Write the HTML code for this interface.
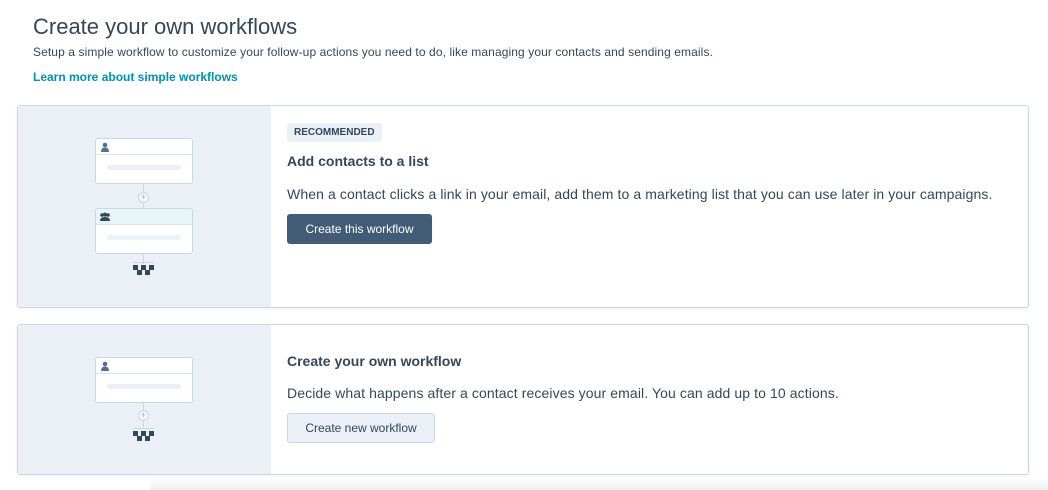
<!DOCTYPE html><html><head><style>
body{margin:0;width:1048px;height:490px;background:#fff;font-family:"Liberation Sans",sans-serif;color:#33475b;position:relative;overflow:hidden}
.a{position:absolute}
h1{position:absolute;left:33px;top:14px;margin:0;font-size:22px;font-weight:normal;color:#33475b}
.card{position:absolute;left:17px;width:1010px;border:1px solid #cbd6e2;border-radius:3px;background:#fff;box-shadow:0 1px 3px rgba(0,0,0,.06)}
.ill{position:absolute;left:0;top:0;bottom:0;width:253px;background:#eaf0f6}
.node{position:absolute;left:77px;width:96px;height:44px;border:1px solid #cbd6e2;border-radius:3px;background:#fff;overflow:hidden}
.node .hd{height:15px;border-bottom:1px solid #dfe3eb}
.node .bar{position:absolute;left:11px;top:26px;width:74px;height:5px;border-radius:3px;background:#eaf0f6}
.line{position:absolute;left:125px;width:1px;background:#cbd6e2}
.plus{position:absolute;left:120px;width:9px;height:9px;border:1px solid #cbd6e2;border-radius:50%;background:#f5f8fa;font-size:9px;line-height:9px;text-align:center;color:#a3b1c2}
.flag{position:absolute;left:115px;width:21px;height:12px;background:
linear-gradient(#33475b,#33475b) 0 2px/5px 5px no-repeat,
linear-gradient(#33475b,#33475b) 8px 2px/5px 5px no-repeat,
linear-gradient(#33475b,#33475b) 16px 2px/5px 5px no-repeat,
linear-gradient(#33475b,#33475b) 4px 7px/5px 5px no-repeat,
linear-gradient(#33475b,#33475b) 12px 7px/5px 5px no-repeat;border-top:1px solid #cbd6e2}
.t{position:absolute;left:269px}
.btn{position:absolute;left:269px;height:30px;border-radius:3px;font-size:12px;line-height:30px;text-align:center}
</style></head><body>
<h1>Create your own workflows</h1>
<div class="a" style="left:33px;top:45px;font-size:12px;letter-spacing:0.1px">Setup a simple workflow to customize your follow-up actions you need to do, like managing your contacts and sending emails.</div>
<div class="a" style="left:33px;top:70px;font-size:12px;font-weight:bold;color:#0091ae">Learn more about simple workflows</div>

<div class="card" style="top:105px;height:201px">
<div class="ill">
 <div class="node" style="top:32px"><div class="hd"><svg width="10" height="10" style="margin:3px 0 0 4px" viewBox="0 0 10 10"><circle cx="5" cy="3" r="2.3" fill="#516f90"/><path d="M1 10 Q1 5.5 5 5.5 Q9 5.5 9 10Z" fill="#516f90"/></svg></div><div class="bar"></div></div>
 <div class="line" style="top:78px;height:24px"></div>
 <div class="plus" style="top:86px">+</div>
 <div class="node" style="top:102px"><div class="hd" style="background:#e5f5f8"><svg width="12" height="10" style="margin:3px 0 0 3px" viewBox="0 0 12 10"><circle cx="3" cy="3" r="1.8" fill="#33475b"/><circle cx="9" cy="3" r="1.8" fill="#33475b"/><circle cx="6" cy="2.6" r="2" fill="#33475b"/><path d="M1 9 Q1 5 6 5 Q11 5 11 9Z" fill="#33475b"/></svg></div><div class="bar" style="background:#e5f5f8"></div></div>
 <div class="line" style="top:148px;height:10px"></div>
 <div class="flag" style="top:156px"></div>
</div>
<div class="a" style="left:269px;top:17px;background:#eaf0f6;border-radius:3px;padding:0 7px;height:19px;line-height:19px;font-size:10px;font-weight:bold">RECOMMENDED</div>
<div class="t" style="top:47px;font-size:14px;font-weight:bold">Add contacts to a list</div>
<div class="t" style="top:80px;font-size:14px;letter-spacing:0.1px">When a contact clicks a link in your email, add them to a marketing list that you can use later in your campaigns.</div>
<div class="btn" style="top:108px;width:145px;background:#425b76;color:#fff">Create this workflow</div>
</div>

<div class="card" style="top:324px;height:149px">
<div class="ill">
 <div class="node" style="top:32px"><div class="hd"><svg width="10" height="10" style="margin:3px 0 0 4px" viewBox="0 0 10 10"><circle cx="5" cy="3" r="2.3" fill="#516f90"/><path d="M1 10 Q1 5.5 5 5.5 Q9 5.5 9 10Z" fill="#516f90"/></svg></div><div class="bar"></div></div>
 <div class="line" style="top:78px;height:24px"></div>
 <div class="plus" style="top:85px">+</div>
 <div class="flag" style="top:103px"></div>
</div>
<div class="t" style="top:28px;font-size:14px;font-weight:bold">Create your own workflow</div>
<div class="t" style="top:60px;font-size:14px;letter-spacing:0.1px">Decide what happens after a contact receives your email. You can add up to 10 actions.</div>
<div class="btn" style="top:88px;width:148px;height:30px;background:#eaf0f6;border:1px solid #cbd6e2;box-sizing:border-box;line-height:28px">Create new workflow</div>
</div>
<div class="a" style="left:150px;right:0;top:478px;height:12px;background:linear-gradient(#fff,#eef0f2)"></div>
</body></html>
